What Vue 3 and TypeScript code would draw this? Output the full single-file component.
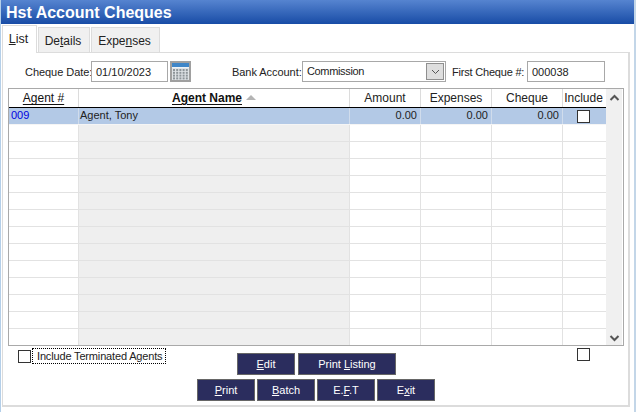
<script setup lang="ts">
interface Row { id: string; name: string; amount: string; expenses: string; cheque: string; check: boolean }
const rows: Row[] = [
  { id: '009', name: 'Agent, Tony', amount: '0.00', expenses: '0.00', cheque: '0.00', check: true },
  ...Array.from({ length: 13 }, () => ({ id: '', name: '', amount: '', expenses: '', cheque: '', check: false })),
]
const calCols: number[] = [0, 1, 2, 3, 4]
const calRows: number[] = [0, 1, 2, 3]
</script>

<template>
  <div class="window">
    <header class="title">Hst Account Cheques</header>
    <nav class="tabs">
      <div class="tab active"><u>L</u>ist</div>
      <div class="tab">De<u>t</u>ails</div>
      <div class="tab">Expe<u>n</u>ses</div>
    </nav>
    <section class="panel">
      <div class="filters">
        <label class="l-date">Cheque Date:</label>
        <div class="field f-date">01/10/2023</div>
        <svg class="cal" width="21" height="21" viewBox="0 0 21 21">
          <rect x="1" y="1" width="19" height="19" fill="#dfe3e6" stroke="#a0a0a0" stroke-width="2" />
          <rect x="2" y="2" width="17" height="4" fill="#3f86c8" />
          <rect x="2" y="6" width="17" height="1" fill="#eef2f6" />
          <g v-for="r in calRows" :key="r">
            <rect v-for="c in calCols" :key="c" :x="3 + c * 3.2" :y="8 + r * 2.8" width="2" height="2" fill="#8d9499" />
          </g>
        </svg>
        <label class="l-bank">Bank Account:</label>
        <div class="field f-bank">
          <span class="tight">Commission</span>
          <span class="drop">
            <svg width="9" height="6" viewBox="0 0 9 6"><path d="M1 1l3.5 3.5L8 1" fill="none" stroke="#555" stroke-width="1" /></svg>
          </span>
        </div>
        <label class="l-first">First Cheque #:</label>
        <div class="field f-first">000038</div>
      </div>

      <div class="grid">
        <div class="table">
          <div class="head">
            <div class="hc c1"><span class="ul">Agent #</span></div>
            <div class="hc c2"><b class="ul">Agent Name</b><i class="sort"></i></div>
            <div class="hc c3">Amount</div>
            <div class="hc c4">Expenses</div>
            <div class="hc c5">Cheque</div>
            <div class="hc c6">Include</div>
          </div>
          <div v-for="(row, i) in rows" :key="i" class="row" :class="{ sel: i === 0 }">
            <div class="c c1 id">{{ row.id }}</div>
            <div class="c c2 name">{{ row.name }}</div>
            <div class="c c3 num">{{ row.amount }}</div>
            <div class="c c4 num">{{ row.expenses }}</div>
            <div class="c c5 num">{{ row.cheque }}</div>
            <div class="c c6 mid"><span v-if="row.check" class="box"></span></div>
          </div>
        </div>
        <div class="scroll">
          <svg width="11" height="8" viewBox="0 0 11 8"><path d="M1.5 6L5.5 2l4 4" fill="none" stroke="#555" stroke-width="2" /></svg>
          <svg width="11" height="8" viewBox="0 0 11 8"><path d="M1.5 2l4 4 4-4" fill="none" stroke="#555" stroke-width="2" /></svg>
        </div>
      </div>

      <footer class="foot">
        <div class="foot-left">
          <span class="box"></span>
          <span class="focus">Include Terminated Agents</span>
        </div>
        <div class="buttons">
          <div class="btn-row">
            <button class="btn w58"><u>E</u>dit</button>
            <button class="btn w98">Print <u>L</u>isting</button>
          </div>
          <div class="btn-row">
            <button class="btn w58"><u>P</u>rint</button>
            <button class="btn w58"><u>B</u>atch</button>
            <button class="btn w58">E.<u>F</u>.T</button>
            <button class="btn w58">E<u>x</u>it</button>
          </div>
        </div>
        <div class="foot-right"><span class="box"></span></div>
      </footer>
    </section>
  </div>
</template>

<style>
html, body { margin: 0; background: #fff; }
</style>

<style scoped>
.window {
  width: 636px;
  height: 412px;
  box-sizing: border-box;
  border-left: 1px solid #b4cfe9;
  border-right: 2px solid #c3d6e8;
  background: #fff;
  font: 11px "Liberation Sans", Arial, sans-serif;
  color: #222;
  overflow: hidden;
}
.title {
  height: 24px;
  margin-left: -1px;
  padding-left: 6px;
  background: linear-gradient(#5684d0, #184ca6);
  color: #fff;
  font-size: 16px;
  font-weight: 700;
  line-height: 25px;
}
.tabs {
  display: flex;
  align-items: flex-end;
  height: 28px;
  padding-left: 1px;
  gap: 1px;
}
.tab {
  box-sizing: border-box;
  height: 25px;
  padding-top: 6px;
  padding-right: 2px;
  border: 1px solid #dcdcdc;
  border-bottom: 0;
  background: #f0f0f0;
  font-size: 12px;
  text-align: center;
  color: #222;
}
.tab:nth-child(1) { width: 35px; }
.tab:nth-child(2) { width: 52px; }
.tab:nth-child(3) { width: 69px; }
.tab.active {
  height: 28px;
  padding-top: 6px;
  margin-bottom: -1px;
  background: #fff;
  position: relative;
  font-size: 12.5px;
}
.panel {
  box-sizing: border-box;
  height: 355px;
  margin-left: 1px;
  width: 628px;
  border: 1px solid #dcdcdc;
  border-right-width: 2px;
  border-bottom-width: 2px;
}
.filters {
  display: flex;
  align-items: center;
  height: 21px;
  margin-top: 8px;
  padding-left: 22px;
}
.filters label { white-space: nowrap; flex: none; letter-spacing: -0.05px; padding-top: 1px; }
.f-date { width: 77px; }
.cal { margin-left: 2px; flex: none; }
.l-date { width: 66px; }
.l-bank { margin-left: 41px; width: 70px; }
.f-bank { width: 144px; display: flex; justify-content: space-between; align-items: center; }
.tight { letter-spacing: -0.35px; }
.l-first { margin-left: 6px; width: 75px; letter-spacing: -0.2px !important; }
.f-first { width: 78px; }
.field {
  box-sizing: border-box;
  height: 21px;
  flex: none;
  border: 1px solid #a8a8a8;
  padding: 0 0 0 4px;
  line-height: 21px;
  background: #fff;
  color: #222;
}
.drop {
  box-sizing: border-box;
  width: 18px;
  height: 17px;
  margin-right: 1px;
  border: 1px solid #8f8f8f;
  background: #dedede;
  display: flex;
  align-items: center;
  justify-content: center;
}
.grid {
  box-sizing: border-box;
  position: relative;
  display: flex;
  width: 616px;
  height: 258px;
  margin: 6px 0 0 5px;
  border: 1px solid #a9a9a9;
  overflow: hidden;
}
.table { width: 597px; flex: none; }
.head {
  display: flex;
  height: 18px;
  border-bottom: 1px solid #000;
}
.hc {
  box-sizing: border-box;
  border-right: 1px solid #dcdcdc;
  font-size: 12px;
  line-height: 18px;
  text-align: center;
  color: #222;
  white-space: nowrap;
}
.hc.c6 { border-right: 0; padding-right: 2px; }
.ul { text-decoration: underline; text-underline-offset: 2px; color: #111; }
.sort {
  display: inline-block;
  margin-left: 4px;
  border-left: 5px solid transparent;
  border-right: 5px solid transparent;
  border-bottom: 5px solid #b4b4b4;
  vertical-align: 2px;
}
.row {
  display: flex;
  height: 17px;
  box-sizing: border-box;
  border-bottom: 1px solid #e2e2e2;
}
.row.sel { background: #b3c9e6; border-bottom-color: #f5f5f5; }
.c {
  box-sizing: border-box;
  border-right: 1px solid #e2e2e2;
  line-height: 15px;
  padding: 0 2px;
}
.c6 { border-right: 0; }
.row .c2 { background: #efefef; }
.row.sel .c2 { background: transparent; }
.row.sel .c { border-right-color: #d0dcec; }
.c1 { width: 70px; }
.c2 { width: 271px; }
.c3, .c4, .c5 { width: 71px; }
.c6 { width: 43px; }
.id { color: #0000e0; }
.name { padding-left: 1px; }
.num { text-align: right; padding-right: 3px; }
.mid { display: flex; justify-content: center; padding: 2px 2px 0 0; }
.box {
  display: block;
  box-sizing: border-box;
  width: 13px;
  height: 13px;
  border: 1px solid #333;
  background: #fff;
  flex: none;
}
.scroll {
  flex: 1;
  width: 17px;
  margin-right: 1px;
  background: #f0f0f0;
  display: flex;
  flex-direction: column;
  justify-content: space-between;
  align-items: center;
  padding: 5px 0 3px;
  box-sizing: border-box;
}
.foot {
  display: grid;
  grid-template-columns: 194px 238px 1fr;
  margin-top: 2px;
}
.foot-left {
  display: flex;
  align-items: flex-start;
  padding: 2px 0 0 15px;
}
.focus {
  box-sizing: border-box;
  height: 16px;
  margin: -2px 0 0 1px;
  padding: 0 3px 0 4px;
  border: 1px dotted #000;
  line-height: 14px;
  color: #222;
  white-space: nowrap;
  letter-spacing: -0.16px;
}
.foot-right { padding-left: 142px; }
.buttons {
  display: flex;
  flex-direction: column;
  align-items: center;
  gap: 4px;
  padding-top: 5px;
}
.btn-row { display: flex; gap: 2px; }
.btn-row:first-child { gap: 3px; margin-left: 1px; }
.btn {
  box-sizing: border-box;
  height: 22px;
  padding: 0;
  border: 1px solid #666;
  background: #2b2d5e;
  color: #fff;
  font: 11px "Liberation Sans", Arial, sans-serif;
}
.w58 { width: 58px; }
.w98 { width: 98px; }
</style>
